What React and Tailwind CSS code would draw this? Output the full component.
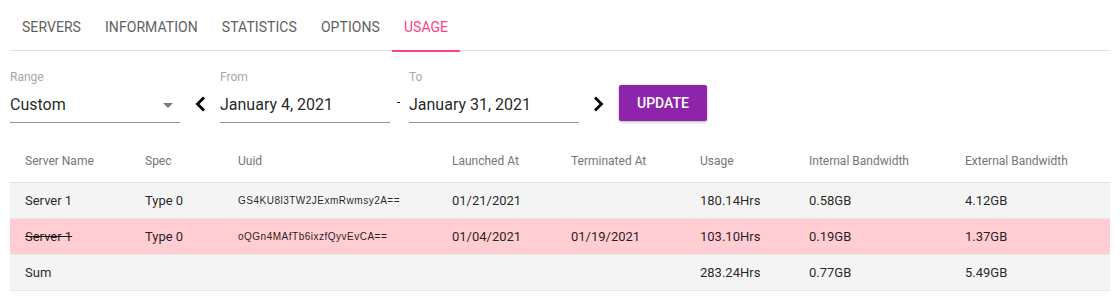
import React from "react";

const tabs = ["SERVERS", "INFORMATION", "STATISTICS", "OPTIONS", "USAGE"];

const cols = [
  { label: "Server Name", w: "w-[120px]" },
  { label: "Spec", w: "w-[93px]" },
  { label: "Uuid", w: "w-[214px]" },
  { label: "Launched At", w: "w-[119px]" },
  { label: "Terminated At", w: "w-[129px]" },
  { label: "Usage", w: "w-[109px]" },
  { label: "Internal Bandwidth", w: "w-[156px]" },
  { label: "External Bandwidth", w: "flex-1" },
];

const rows = [
  { bg: "bg-[#f4f4f4]", strike: false, cells: ["Server 1", "Type 0", "GS4KU8l3TW2JExmRwmsy2A==", "01/21/2021", "", "180.14Hrs", "0.58GB", "4.12GB"] },
  { bg: "bg-[#ffcdd2]", strike: true, cells: ["Server 1", "Type 0", "oQGn4MAfTb6ixzfQyvEvCA==", "01/04/2021", "01/19/2021", "103.10Hrs", "0.19GB", "1.37GB"] },
  { bg: "bg-[#f4f4f4]", strike: false, cells: ["Sum", "", "", "", "", "283.24Hrs", "0.77GB", "5.49GB"] },
];

function Chevron({ dir }) {
  return (
    <svg width="14" height="16" viewBox="0 0 14 16">
      {dir === "left" ? (
        <path d="M10 2.5 L4.5 8 L10 13.5" fill="none" stroke="#000" strokeWidth="2.8" strokeLinecap="square" />
      ) : (
        <path d="M4 2.5 L9.5 8 L4 13.5" fill="none" stroke="#000" strokeWidth="2.8" strokeLinecap="square" />
      )}
    </svg>
  );
}

function Field({ label, value, select }) {
  return (
    <div className="flex flex-col w-[170px]">
      <div className="h-[14px] text-[12px] leading-[14px] text-[#a8a8a8]">{label}</div>
      <div className="mt-[10px] flex items-center justify-between h-[22px] text-[16px] leading-[22px] text-[rgba(0,0,0,0.87)]">
        <span>{value}</span>
        {select && (
          <svg width="10" height="5" viewBox="0 0 10 5" className="mr-[7px]">
            <path d="M0 0 L10 0 L5 5 Z" fill="#7a7a7a" />
          </svg>
        )}
      </div>
      <div className="mt-[6px] h-px bg-[#949494]" />
    </div>
  );
}

export default function App() {
  return (
    <div className="w-[1120px] h-[301px] bg-white px-[10px] font-['Roboto',sans-serif] overflow-hidden">
      <div className="flex h-[51px] border-b border-[#e0e0e0] w-[1100px]">
        {tabs.map((t) => {
          const active = t === "USAGE";
          return (
            <div
              key={t}
              className={`relative px-3 flex items-center h-[51px] text-[14px] pt-[3px] tracking-[0.06px] ${
                active ? "text-[#ff4081]" : "text-[#616161]"
              }`}
            >
              {t}
              {active && <div className="absolute left-0 right-0 bottom-[-1px] h-[2px] bg-[#ff4081]" />}
            </div>
          );
        })}
      </div>

      <div className="flex items-start pt-[19px]">
        <Field label="Range" value="Custom" select />
        <div className="w-[40px] h-[53px] flex items-center justify-center pt-[15px]">
          <Chevron dir="left" />
        </div>
        <Field label="From" value="January 4, 2021" />
        <div className="w-[19px] h-[53px] flex items-center justify-center pt-[11px] pr-[2px] text-[12px] text-black">-</div>
        <Field label="To" value="January 31, 2021" />
        <div className="w-[40px] h-[53px] flex items-center justify-center pt-[15px]">
          <Chevron dir="right" />
        </div>
        <button className="mt-[15px] w-[88px] h-[36px] rounded-[2px] bg-[#8e24aa] text-white text-[14px] font-medium shadow-[0_1px_3px_rgba(0,0,0,0.3)]">
          UPDATE
        </button>
      </div>

      <div className="mt-[16px] w-[1100px]">
        <div className="flex h-[44px] items-center border-b border-[#e0e0e0] text-[12px] text-[#757575]">
          {cols.map((c) => (
            <div key={c.label} className={`${c.w} pl-[15px]`}>
              {c.label}
            </div>
          ))}
        </div>
        {rows.map((r, i) => (
          <div key={i} className={`flex h-[36px] items-center border-b border-[#e6e6e6] ${r.bg} text-[13px] text-[rgba(0,0,0,0.87)]`}>
            {r.cells.map((v, j) => (
              <div
                key={j}
                className={`${cols[j].w} pl-[15px] ${j === 0 && r.strike ? "line-through" : ""} ${
                  j === 2 ? "text-[10px] font-['Liberation_Sans',sans-serif] tracking-[0.5px]" : ""
                }`}
              >
                {v}
              </div>
            ))}
          </div>
        ))}
      </div>
    </div>
  );
}
